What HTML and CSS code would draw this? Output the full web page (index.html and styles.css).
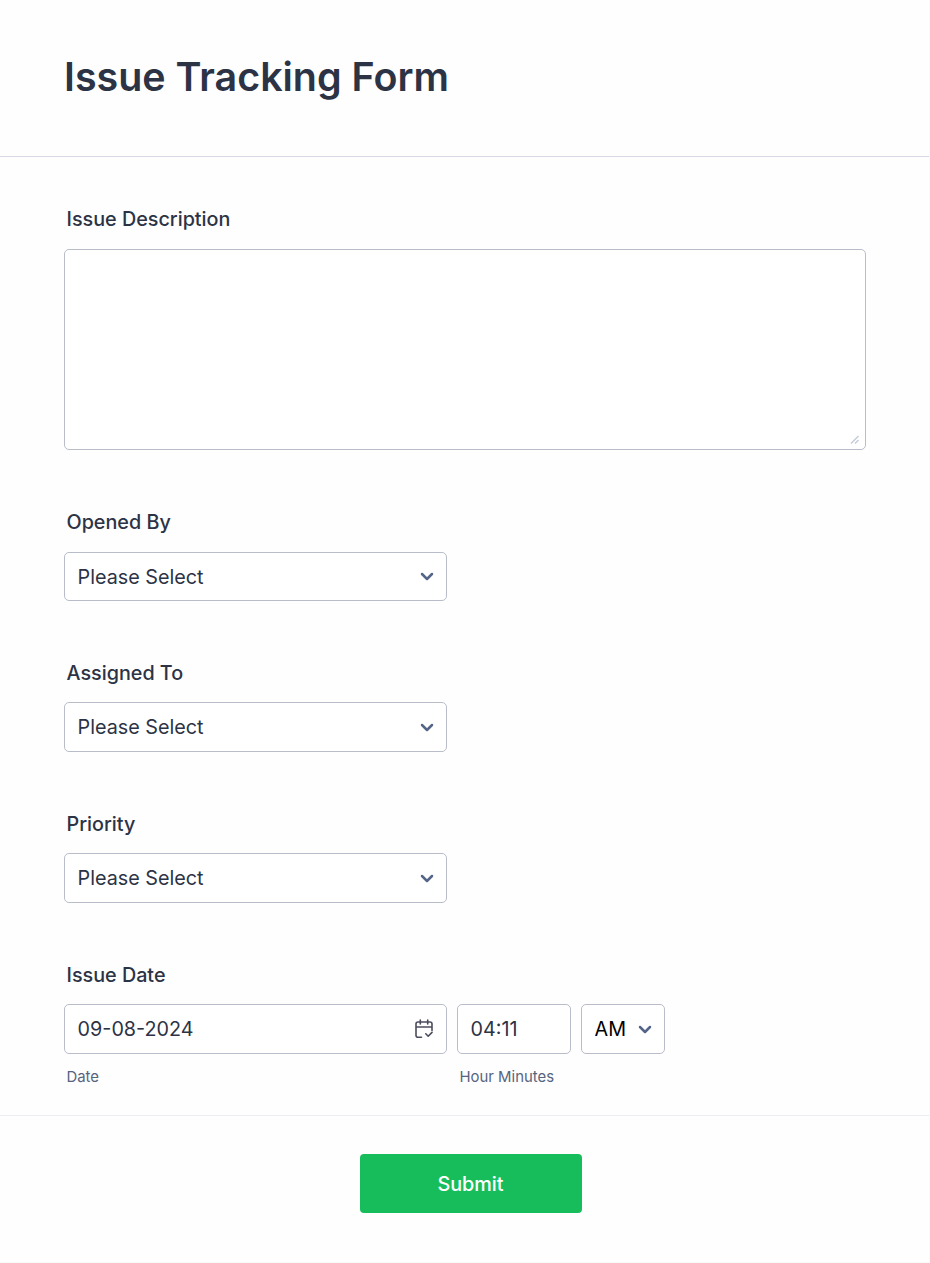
FILE: index.html
```html
<!DOCTYPE html>
<html lang="en">
<head>
    <meta charset="UTF-8">
    <meta name="viewport" content="width=device-width, initial-scale=1.0">
    <title>Issue Tracking Form</title>
    <link rel="stylesheet" href="styles.css">
</head>
<body>
    <form class="form">
        <header class="form-header">
            <h1>Issue Tracking Form</h1>
        </header>

        <div class="form-body">
            <div class="field field-top">
                <label for="description">Issue Description</label>
                <div class="textarea-wrap">
                    <textarea id="description"></textarea>
                    <svg class="grip" viewBox="0 0 10 10"><path d="M1 8.5L8.5 1M5 8.5L8.5 5"/></svg>
                </div>
            </div>

            <div class="field field-top">
                <label for="opened">Opened By</label>
                <div class="control">
                    <select id="opened"><option>Please Select</option></select>
                    <svg class="chevron" viewBox="0 0 14 9"><path d="M2 2l5 5 5-5"/></svg>
                </div>
            </div>

            <div class="field">
                <label for="assigned">Assigned To</label>
                <div class="control">
                    <select id="assigned"><option>Please Select</option></select>
                    <svg class="chevron" viewBox="0 0 14 9"><path d="M2 2l5 5 5-5"/></svg>
                </div>
            </div>

            <div class="field">
                <label for="priority">Priority</label>
                <div class="control">
                    <select id="priority"><option>Please Select</option></select>
                    <svg class="chevron" viewBox="0 0 14 9"><path d="M2 2l5 5 5-5"/></svg>
                </div>
            </div>

            <div class="field">
                <label for="date">Issue Date</label>
                <div class="date-row">
                    <div class="date-part">
                        <div class="control">
                            <input type="text" id="date" value="09-08-2024">
                            <svg class="calendar" viewBox="0 0 18 20">
                                <path d="M6.5 18.3H3Q1 18.3 1 16.3V5Q1 3 3 3H15Q17 3 17 5V11.5M1 8H17M5.3 1V5M12.7 1V5M10.8 14.8L13.2 17.2L17 13.4"/>
                            </svg>
                        </div>
                        <span class="sublabel">Date</span>
                    </div>
                    <div class="date-part">
                        <div class="control time">
                            <input type="text" id="time" value="04:11">
                        </div>
                        <span class="sublabel">Hour Minutes</span>
                    </div>
                    <div class="control ampm">
                        <select id="ampm"><option>AM</option><option>PM</option></select>
                        <svg class="chevron" viewBox="0 0 14 9"><path d="M2 2l5 5 5-5"/></svg>
                    </div>
                </div>
            </div>
        </div>

        <footer class="form-footer">
            <button type="button">Submit</button>
        </footer>
    </form>
</body>
</html>
```

FILE: styles.css
```css
* {
    margin: 0;
    padding: 0;
    box-sizing: border-box;
    font-family: 'Inter', sans-serif;
}

body {
    background: #fefefe;
    color: #2c3345;
    font-size: 19.75px;
    overflow: hidden;
}

.form {
    height: 1263px;
    border-right: 1px solid #fafafa;
    border-bottom: 1px solid #fafafa;
}

.form-header {
    height: 157px;
    padding: 53px 64px 0;
    border-bottom: 1px solid #d9d9e6;
}

h1 {
    font-size: 39.4px;
    font-weight: 600;
    line-height: 48px;
}

.form-body {
    height: 959px;
    padding: 50px 64px 0;
    border-bottom: 1px solid #ececf2;
}

.field {
    margin-bottom: 60px;
}

label {
    display: block;
    margin-bottom: 17px;
    padding-left: 2.5px;
    font-weight: 500;
    line-height: 24px;
}

.field-top label {
    margin-bottom: 18px;
}

.textarea-wrap {
    position: relative;
    width: 801.5px;
    height: 201px;
}

textarea {
    display: block;
    width: 100%;
    height: 100%;
    padding: 12px;
    background: #fff;
    border: 1px solid #b8bdc9;
    border-radius: 5px;
    font-size: 19.75px;
    resize: none;
}

.grip {
    position: absolute;
    right: 6px;
    bottom: 5px;
    width: 10px;
    height: 10px;
    fill: none;
    stroke: #c3cad8;
    stroke-width: 1.4;
}

.control {
    display: flex;
    align-items: center;
    width: 383px;
    height: 50px;
    padding: 0 13px 0 12.6px;
    background: #fff;
    border: 1px solid #b8bdc9;
    border-radius: 5px;
}

.field-top .control {
    height: 49px;
}

select,
input {
    flex: 1;
    min-width: 0;
    border: none;
    outline: none;
    appearance: none;
    background: transparent;
    color: #2c3345;
    font-size: 19.75px;
    line-height: 26px;
}

.chevron {
    width: 14px;
    height: 9px;
    margin-right: -1px;
    fill: none;
    stroke: #55658a;
    stroke-width: 2.5;
    stroke-linecap: round;
    stroke-linejoin: round;
}

.calendar {
    width: 18px;
    height: 20px;
    fill: none;
    stroke: #4c4d5c;
    stroke-width: 1.6;
    stroke-linecap: round;
    stroke-linejoin: round;
}

.date-row {
    display: flex;
    gap: 10px;
}

.time {
    width: 114px;
}

.ampm {
    width: 84px;
}

.ampm select {
    color: #000;
}

.sublabel {
    display: block;
    margin-top: 14px;
    padding-left: 2.5px;
    color: #57647e;
    font-size: 14.9px;
    line-height: 18px;
}

.form-footer {
    display: flex;
    justify-content: center;
    padding: 38px 0 0 12px;
}

button {
    width: 222px;
    height: 59px;
    background: #18bd5b;
    color: #fff;
    border: none;
    border-radius: 4px;
    font-size: 19.8px;
    font-weight: 500;
    cursor: pointer;
}
```
